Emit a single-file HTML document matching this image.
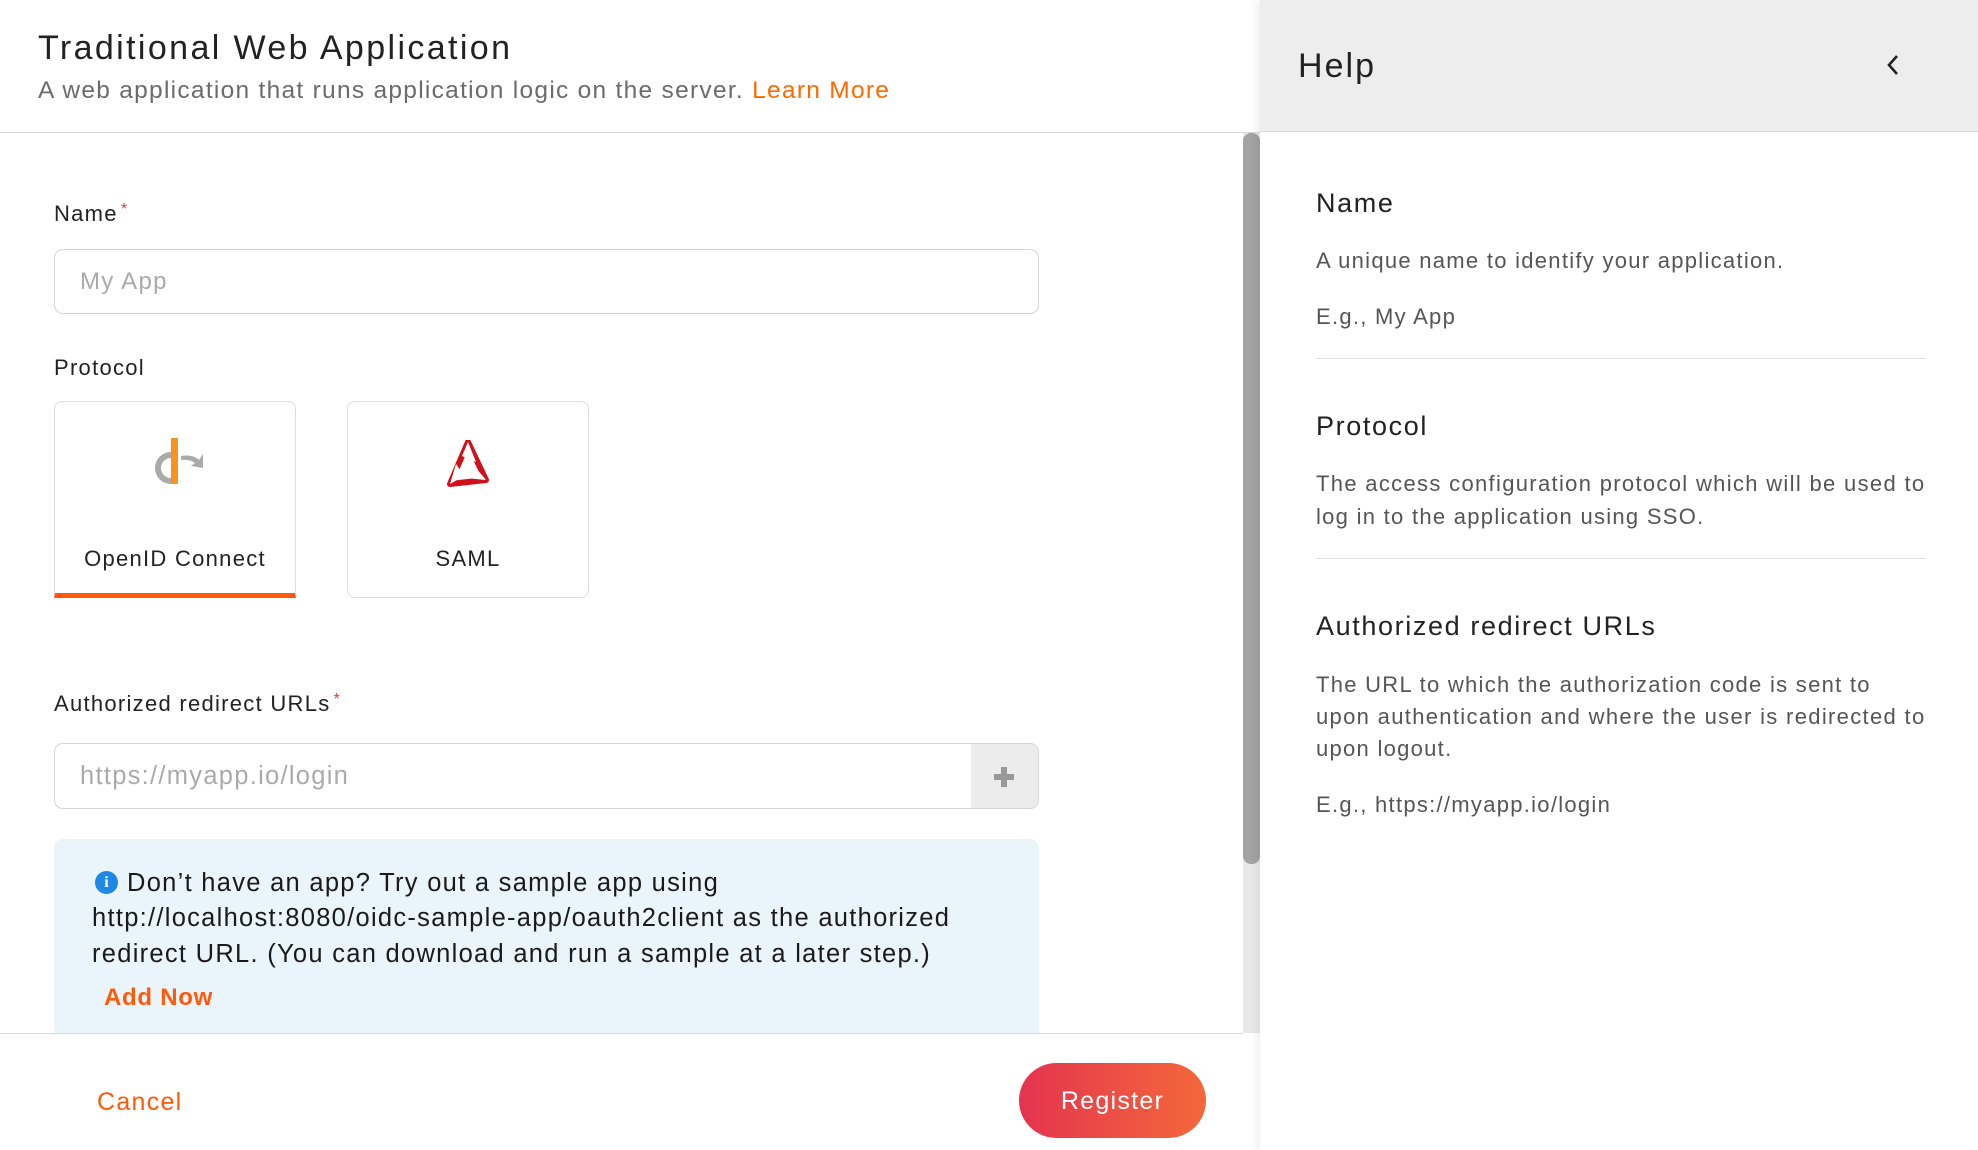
<!DOCTYPE html>
<html><head><meta charset="utf-8"><style>
*{margin:0;padding:0;box-sizing:border-box}
body{width:1978px;height:1150px;overflow:hidden;background:#fff;font-family:"Liberation Sans",sans-serif;color:#222;position:relative;letter-spacing:0.08em}
.a{position:absolute;white-space:nowrap}
.req{color:#e53935;font-size:16px;vertical-align:top;margin-left:3px;position:relative;top:-4px}
.card{position:absolute;top:401px;width:242px;height:197px;border:1px solid #ddd;border-radius:8px;background:#fff}
.hp{position:absolute;left:1316px;font-size:22px;color:#555;line-height:32px;white-space:nowrap}
.hh{position:absolute;left:1316px;font-size:27px;color:#222;white-space:nowrap;letter-spacing:0.06em}
.dv{position:absolute;left:1316px;width:610px;height:1px;background:#ddd}
</style></head><body>
<div class="a" style="left:38px;top:27px;font-size:34px;line-height:42px;letter-spacing:0.07em">Traditional Web Application</div>
<div class="a" style="left:38px;top:77px;font-size:24.5px;line-height:28px;color:#6b6b6b">A web application that runs application logic on the server. <span style="color:#ff6a00">Learn More</span></div>
<div style="position:absolute;left:0;top:132px;width:1260px;height:1px;background:#d8d8d8"></div>

<div class="a" style="left:54px;top:201px;font-size:22px;line-height:26px">Name<span class="req">*</span></div>
<div style="position:absolute;left:54px;top:249px;width:985px;height:65px;border:1px solid #d5d5d5;border-radius:9px"></div>
<div class="a" style="left:80px;top:268px;font-size:24px;line-height:28px;color:#aaa">My App</div>

<div class="a" style="left:54px;top:355px;font-size:22px;line-height:26px">Protocol</div>
<div class="card" style="left:54px;border-bottom:5px solid #ff5a0a;border-radius:8px 8px 0 0">
<svg style="position:absolute;left:94px;top:36px" width="56" height="52" viewBox="0 0 56 52"><path d="M22 14 A16 16 0 1 0 22 46 L22 40 A10 10 0 1 1 22 20 Z" fill="#aaa"/><rect x="22" y="0" width="7" height="46" fill="#f7931e"/><path d="M32 18 Q44 16 50 22 L54 16 L54 30 L42 28 L46 25 Q40 21 32 22 Z" fill="#aaa"/></svg>
<div class="a" style="left:0;width:240px;text-align:center;top:144px;font-size:22px;line-height:26px">OpenID Connect</div></div>
<div class="card" style="left:347px">
<svg style="position:absolute;left:94px;top:38px" width="52" height="50" viewBox="0 0 52 50"><path d="M26 2 L44 40 L8 44 Z" fill="none" stroke="#d0111b" stroke-width="6" stroke-linejoin="round"/><path d="M26 2 L34 22 L20 16 Z M44 40 L24 38 L34 28 Z M8 44 L14 24 L22 36 Z" fill="#fff"/></svg>
<div class="a" style="left:0;width:240px;text-align:center;top:144px;font-size:22px;line-height:26px">SAML</div></div>

<div class="a" style="left:54px;top:691px;font-size:22px;line-height:26px">Authorized redirect URLs<span class="req">*</span></div>
<div style="position:absolute;left:54px;top:743px;width:985px;height:66px;border:1px solid #d5d5d5;border-radius:9px;overflow:hidden"><div style="position:absolute;right:0;top:0;width:67px;height:66px;background:#ececec"></div></div>
<div class="a" style="left:994px;top:774px;width:20px;height:6px;background:#999"></div>
<div class="a" style="left:1001px;top:767px;width:6px;height:20px;background:#999"></div>
<div class="a" style="left:80px;top:762px;font-size:25.5px;line-height:28px;color:#aaa">https://myapp.io/login</div>

<div style="position:absolute;left:54px;top:839px;width:985px;height:200px;background:#eaf4fb;border-radius:9px 9px 0 0"></div>
<div class="a" style="left:95px;top:871px;width:23px;height:23px;border-radius:50%;background:#1e88e5;color:#fff;font-size:16px;font-weight:bold;text-align:center;line-height:23px;font-family:'Liberation Serif',serif;letter-spacing:0">i</div>
<div class="a" style="left:127px;top:868px;font-size:25.5px;line-height:30px;color:#1a1a1a">Don’t have an app? Try out a sample app using</div>
<div class="a" style="left:92px;top:903px;font-size:25.5px;line-height:30px;color:#1a1a1a">http://localhost:8080/oidc-sample-app/oauth2client as the authorized</div>
<div class="a" style="left:92px;top:939px;font-size:25.5px;line-height:30px;color:#1a1a1a">redirect URL. (You can download and run a sample at a later step.)</div>
<div class="a" style="left:104px;top:983px;font-size:24px;line-height:30px;color:#ff5a0a;font-weight:bold;letter-spacing:0.03em">Add Now</div>

<div style="position:absolute;left:0;top:1033px;width:1243px;height:117px;background:#fff;border-top:1px solid #d8d8d8"></div>
<div class="a" style="left:97px;top:1087px;font-size:25px;line-height:30px;color:#ff5a0a">Cancel</div>
<div style="position:absolute;left:1019px;top:1063px;width:187px;height:75px;border-radius:38px;background:linear-gradient(90deg,#e4344f,#f4683a)"></div>
<div class="a" style="left:1019px;width:187px;text-align:center;top:1086px;font-size:25px;line-height:30px;color:#fff">Register</div>

<div style="position:absolute;left:1243px;top:133px;width:17px;height:900px;background:#e8e8e8"></div>
<div style="position:absolute;left:1243px;top:133px;width:17px;height:731px;background:#a3a3a3;border-radius:8px"></div>

<div style="position:absolute;left:1260px;top:0;width:718px;height:1150px;background:#fff;box-shadow:-4px 0 8px rgba(0,0,0,.06)"></div>
<div style="position:absolute;left:1260px;top:0;width:718px;height:132px;background:#ededed;border-bottom:1px solid #d5d5d5"></div>
<div class="a" style="left:1298px;top:46px;font-size:34px;line-height:40px;letter-spacing:0.06em">Help</div>
<svg style="position:absolute;left:1885px;top:53px" width="16" height="24" viewBox="0 0 16 24"><path d="M12 3 L4 12 L12 21" fill="none" stroke="#222" stroke-width="2.6"/></svg>

<div class="hh" style="top:186px;line-height:34px">Name</div>
<div class="hp" style="top:245px">A unique name to identify your application.</div>
<div class="hp" style="top:301px">E.g., My App</div>
<div class="dv" style="top:358px"></div>
<div class="hh" style="top:409px;line-height:34px">Protocol</div>
<div class="hp" style="top:468px;letter-spacing:0.06em">The access configuration protocol which will be used to</div>
<div class="hp" style="top:501px">log in to the application using SSO.</div>
<div class="dv" style="top:558px"></div>
<div class="hh" style="top:609px;line-height:34px">Authorized redirect URLs</div>
<div class="hp" style="top:669px">The URL to which the authorization code is sent to</div>
<div class="hp" style="top:701px;letter-spacing:0.06em">upon authentication and where the user is redirected to</div>
<div class="hp" style="top:733px">upon logout.</div>
<div class="hp" style="top:789px">E.g., https://myapp.io/login</div>
</body></html>
